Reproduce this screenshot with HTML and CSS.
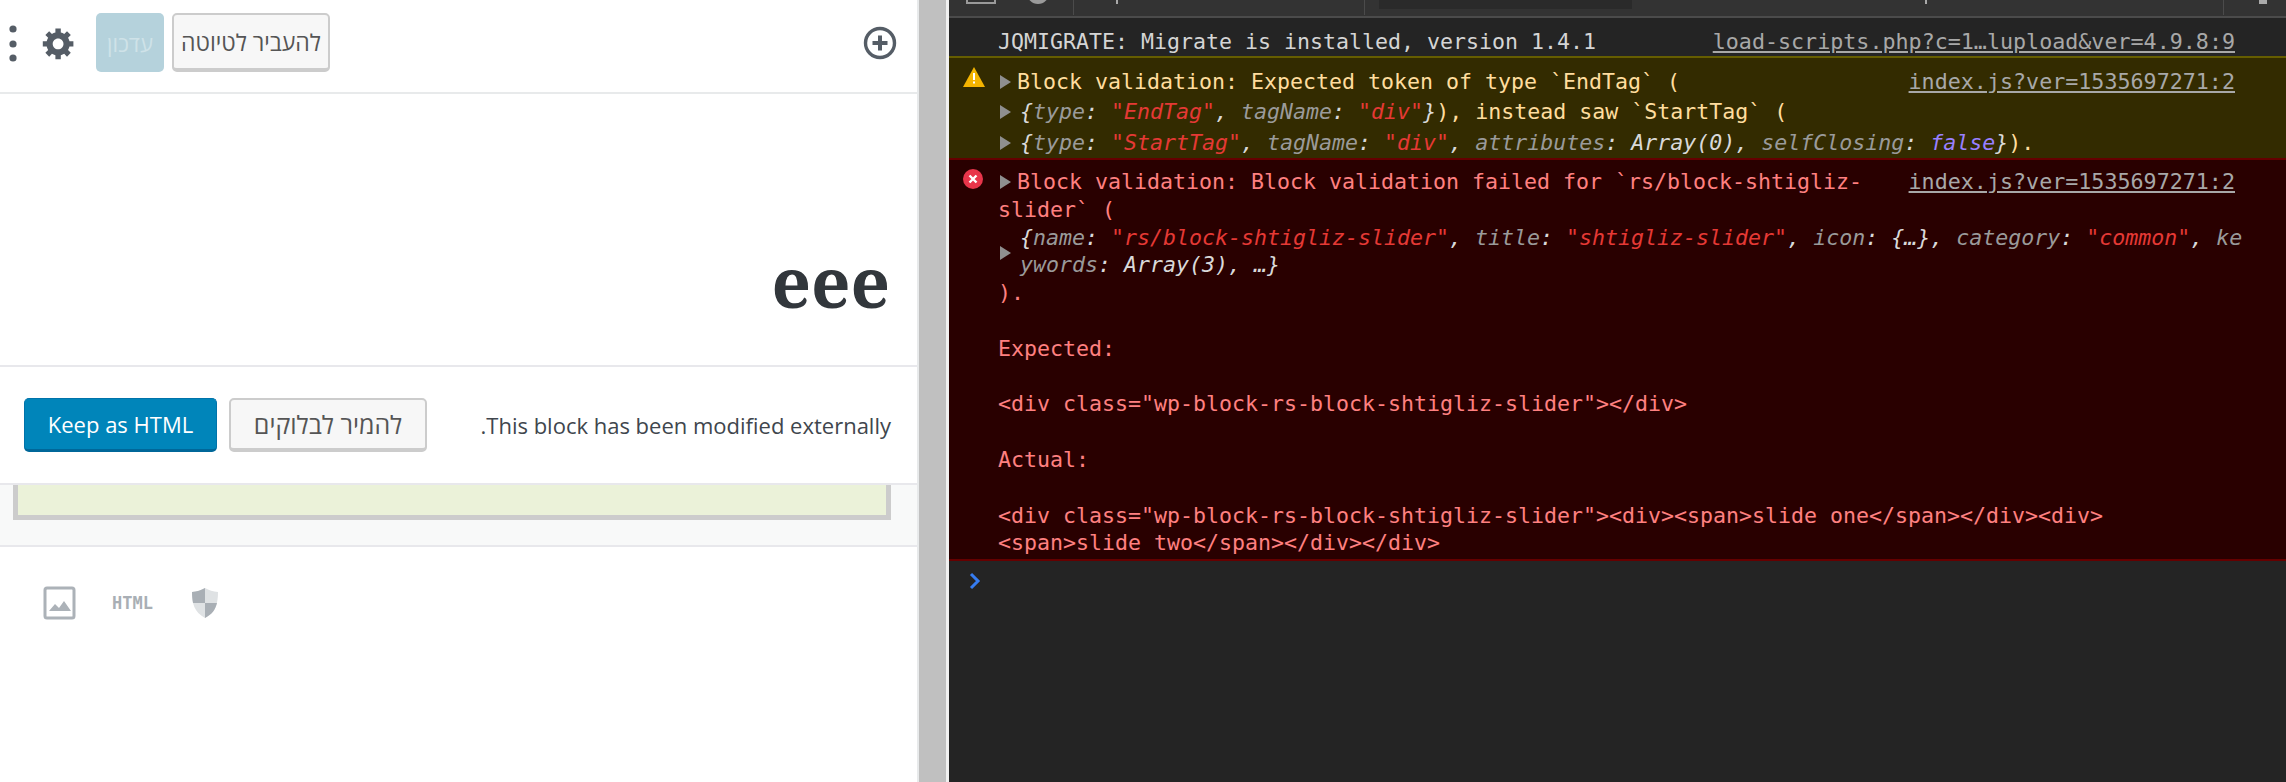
FILE: index.html
```html
<!DOCTYPE html>
<html lang="he">
<head>
    <meta charset="UTF-8">
    <meta name="viewport" content="width=device-width, initial-scale=1.0">
    <title>Block validation</title>
    <link rel="stylesheet" href="styles.css">
</head>
<body>
    <div class="editor">
        <header class="topbar">
            <div class="topbar-left">
                <svg class="dots" width="12" height="44" viewBox="0 0 12 44"><circle cx="6" cy="7" r="3.6"/><circle cx="6" cy="22" r="3.6"/><circle cx="6" cy="36" r="3.6"/></svg>
                <svg class="gear" width="36" height="36" viewBox="0 0 20 20"><path d="M18 12h-2.180c-.17.7-.44 1.350-.81 1.930l1.540 1.540-2.100 2.100-1.540-1.540c-.58.36-1.230.63-1.910.79V19H8v-2.180c-.68-.16-1.330-.43-1.910-.79l-1.540 1.540-2.120-2.120 1.540-1.540c-.36-.58-.63-1.230-.79-1.910H1V9.030h2.170c.16-.7.44-1.350.8-1.940L2.430 5.550l2.100-2.100 1.540 1.540c.58-.37 1.240-.64 1.930-.81V2h3v2.180c.68.16 1.330.43 1.910.79l1.540-1.540 2.120 2.120-1.540 1.540c.36.59.64 1.240.8 1.940H18V12zm-8.500 1.500c1.660 0 3-1.340 3-3s-1.340-3-3-3-3 1.340-3 3 1.340 3 3 3z"/></svg>
                <button class="btn btn-update">עדכון</button>
                <button class="btn btn-draft">להעביר לטיוטה</button>
            </div>
            <svg class="plus" width="36" height="36" viewBox="0 0 36 36"><circle cx="18" cy="18" r="14.500"/><path d="M18 10.500v15M10.500 18h15"/></svg>
        </header>

        <div class="title-area">
            <h1>eee</h1>
        </div>

        <div class="warning-bar" dir="rtl">
            <p>This block has been modified externally.</p>
            <div class="warning-actions">
                <button class="btn btn-convert">להמיר לבלוקים</button>
                <button class="btn btn-primary">Keep as HTML</button>
            </div>
        </div>

        <div class="block-preview">
            <div class="green-box"></div>
        </div>

        <div class="inserter-icons">
            <svg width="34" height="34" viewBox="0 0 34 34"><rect x="2" y="2" width="29" height="30" rx="2" class="img-frame"/><path d="M6 25l6-7 4 4 5-7 7 10z" class="img-hill"/></svg>
            <span class="html-icon">HTML</span>
            <svg width="28" height="32" viewBox="0 0 28 32"><path d="M14 1c4 2.500 8 3.500 13 4 0 11-2 20-13 26C3 25 1 16 1 5c5-.5 9-1.500 13-4z" class="shield-light"/><path d="M14 1v15H2C1.300 12 1 8 1 5c5-.5 9-1.500 13-4zM14 16h12c-1.500 6.500-5 11.500-12 15z" class="shield-dark"/></svg>
        </div>
    </div>

    <div class="scrollbar"></div>

    <div class="console">
        <div class="console-toolbar">
            <span class="tb-panel"></span>
            <span class="tb-stop"></span>
            <span class="tb-sep tb-sep-a"></span>
            <span class="tb-tick tb-tick-a"></span>
            <span class="tb-sep tb-sep-b"></span>
            <span class="tb-filter"></span>
            <span class="tb-tick tb-tick-b"></span>
            <span class="tb-sep tb-sep-c"></span>
            <span class="tb-square"></span>
        </div>

        <div class="msg msg-log">
            <div class="line"><a class="src">load-scripts.php?c=1…lupload&amp;ver=4.9.8:9</a>JQMIGRATE: Migrate is installed, version 1.4.1</div>
        </div>

        <div class="msg msg-warn">
            <svg class="msg-icon" width="22" height="20" viewBox="0 0 22 20"><path d="M11 0l11 20H0z" class="warn-tri"/><path d="M10 6h2v7h-2zM10 14.500h2v2h-2z" class="warn-mark"/></svg>
            <div class="line line-lead"><a class="src">index.js?ver=1535697271:2</a><i class="arrow"></i>Block validation: Expected token of type `EndTag` (</div>
            <div class="line line-obj"><i class="arrow"></i><em class="val">{<span class="key">type</span>: <span class="str">"EndTag"</span>, <span class="key">tagName</span>: <span class="str">"div"</span>}</em>), instead saw `StartTag` (</div>
            <div class="line line-obj"><i class="arrow"></i><em class="val">{<span class="key">type</span>: <span class="str">"StartTag"</span>, <span class="key">tagName</span>: <span class="str">"div"</span>, <span class="key">attributes</span>: Array(0), <span class="key">selfClosing</span>: <span class="bool">false</span>}</em>).</div>
        </div>

        <div class="msg msg-error">
            <svg class="msg-icon" width="20" height="20" viewBox="0 0 20 20"><circle cx="10" cy="10" r="10" class="err-dot"/><path d="M6.500 6.500l7 7M13.500 6.500l-7 7" class="err-x"/></svg>
            <div class="line line-lead"><a class="src">index.js?ver=1535697271:2</a><i class="arrow"></i>Block validation: Block validation failed for `rs/block-shtigliz-</div>
            <div class="line">slider` (</div>
            <div class="obj-wrap">
                <i class="arrow"></i>
                <div class="line val">{<span class="key">name</span>: <span class="str">"rs/block-shtigliz-slider"</span>, <span class="key">title</span>: <span class="str">"shtigliz-slider"</span>, <span class="key">icon</span>: {…}, <span class="key">category</span>: <span class="str">"common"</span>, <span class="key">ke</span></div>
                <div class="line val"><span class="key">ywords</span>: Array(3), …}</div>
            </div>
            <div class="line">).</div>
            <div class="line">&nbsp;</div>
            <div class="line">Expected:</div>
            <div class="line">&nbsp;</div>
            <div class="line">&lt;div class="wp-block-rs-block-shtigliz-slider"&gt;&lt;/div&gt;</div>
            <div class="line">&nbsp;</div>
            <div class="line">Actual:</div>
            <div class="line">&nbsp;</div>
            <div class="line">&lt;div class="wp-block-rs-block-shtigliz-slider"&gt;&lt;div&gt;&lt;span&gt;slide one&lt;/span&gt;&lt;/div&gt;&lt;div&gt;</div>
            <div class="line">&lt;span&gt;slide two&lt;/span&gt;&lt;/div&gt;&lt;/div&gt;</div>
        </div>

        <div class="prompt">
            <svg width="14" height="18" viewBox="0 0 14 18"><path d="M3 2l7 7-7 7"/></svg>
        </div>
    </div>
</body>
</html>
```

FILE: styles.css
```css
* {
    box-sizing: border-box;
}
body {
    margin: 0;
    height: 782px;
    overflow: hidden;
    display: flex;
    background: #fff;
    font-family: "Open Sans", "DejaVu Sans", sans-serif;
    color: #555d66;
}

/* left pane, the editor */
.editor {
    width: 919px;
    height: 782px;
    flex: none;
    background: #fff;
    border-right: 2px solid #e8eaeb;
}
.topbar {
    height: 94px;
    border-bottom: 2px solid #e8eaeb;
    display: flex;
    justify-content: space-between;
    align-items: flex-start;
    padding: 13px 19px 0 7px;
}
.topbar-left {
    display: flex;
    align-items: flex-start;
}
.dots {
    fill: #555d66;
    margin-top: 9px;
}
.gear {
    fill: #555d66;
    margin: 12px 19px 0 22px;
}
.plus {
    margin-top: 12px;
    fill: none;
    stroke: #555d66;
}
.plus circle {
    stroke-width: 3.4;
}
.plus path {
    stroke-width: 4;
}
.btn {
    font-family: "Open Sans", "DejaVu Sans", sans-serif;
    font-size: 22px;
    border-radius: 5px;
    padding: 0;
    height: 59px;
    border: 2px solid #ccc;
    border-bottom-width: 4px;
    background: #f7f7f7;
    color: #555;
}
.btn-update {
    width: 68px;
    margin-right: 8px;
    background: #b5d2dc;
    border: 0;
    color: #cfe2e8;
}
.btn-draft {
    width: 158px;
    font-size: 23px;
}
.title-area {
    height: 273px;
    padding: 142px 27px 0 0;
    border-bottom: 2px solid #e8e8ec;
    text-align: right;
}
h1 {
    margin: 0;
    font-family: "Noto Serif", "Liberation Serif", serif;
    font-size: 69px;
    line-height: 90px;
    font-weight: 700;
    color: #32373c;
}
.warning-bar {
    height: 118px;
    border-bottom: 2px solid #e8e8ec;
    display: flex;
    justify-content: space-between;
    align-items: center;
    padding: 0 26px 0 24px;
    font-size: 22px;
}
.warning-bar p {
    margin: 0;
    color: #40464d;
}
.warning-actions {
    display: flex;
    gap: 12px;
}
.btn-convert {
    width: 198px;
    height: 54px;
    font-size: 25px;
}
.btn-primary {
    width: 193px;
    height: 54px;
    background: #0085ba;
    border: 1px solid #0073aa;
    border-bottom: 3px solid #006799;
    color: #fff;
}
.block-preview {
    height: 62px;
    background: #f8f9f9;
    border-bottom: 2px solid #e8e8ec;
    padding: 0 26px 0 13px;
}
.green-box {
    height: 35px;
    background: #ebf2d9;
    border: 5px solid #ccc;
    border-top: 0;
}
.inserter-icons {
    display: flex;
    align-items: center;
    padding: 39px 0 0 43px;
    gap: 36px;
}
.img-frame {
    fill: none;
    stroke: #acb2b8;
    stroke-width: 3;
}
.img-hill {
    fill: #acb2b8;
}
.html-icon {
    font-family: "DejaVu Sans Mono", monospace;
    font-size: 17px;
    font-weight: 700;
    color: #a9afb5;
    width: 43px;
    margin-left: -1px;
}
.shield-light {
    fill: #dfe2e4;
}
.shield-dark {
    fill: #a9afb5;
}

.scrollbar {
    width: 30px;
    flex: none;
    background: #c0c0c0;
    border-right: 3px solid #f0f0f0;
}

/* right pane, the devtools console */
.console {
    flex: 1;
    height: 782px;
    background: #242424;
    font-family: "DejaVu Sans Mono", monospace;
    font-size: 21.6px;
    line-height: 27.8px;
    overflow: hidden;
}
.line {
    white-space: pre;
}
.console-toolbar {
    position: relative;
    height: 18px;
    background: #333;
    border-bottom: 2px solid #4b4b4b;
}
.tb-panel {
    position: absolute;
    left: 17px;
    top: -8px;
    width: 30px;
    height: 12px;
    border: 2px solid #9a9a9a;
}
.tb-stop {
    position: absolute;
    left: 78px;
    top: -12px;
    width: 22px;
    height: 16px;
    border-radius: 0 0 11px 11px;
    background: #9a9a9a;
}
.tb-sep {
    position: absolute;
    top: 0;
    width: 1px;
    height: 15px;
    background: #4b4b4b;
}
.tb-sep-a { left: 124px; }
.tb-sep-b { left: 415px; }
.tb-sep-c { left: 1274px; }
.tb-tick {
    position: absolute;
    top: 0;
    width: 2px;
    height: 4px;
    background: #aaa;
}
.tb-tick-a { left: 167px; }
.tb-tick-b { left: 976px; }
.tb-filter {
    position: absolute;
    left: 430px;
    top: 0;
    width: 253px;
    height: 9px;
    background: #2a2a2a;
}
.tb-square {
    position: absolute;
    left: 1310px;
    top: 0;
    width: 8px;
    height: 4px;
    background: #aaa;
}
.msg {
    position: relative;
    padding-left: 49px;
    padding-right: 51px;
    border-bottom: 2px solid transparent;
}
.msg-log {
    height: 40px;
    padding-top: 10px;
    color: #d5d5d5;
    border-bottom-color: #655d00;
}
.msg-warn {
    height: 102px;
    padding-top: 10px;
    background: #332b00;
    color: #ffdd9e;
    border-bottom-color: #650000;
}
.msg-error {
    height: 401px;
    padding-top: 8px;
    background: #290000;
    color: #ff8080;
    border-bottom-color: #650000;
}
.msg-warn .line-obj {
    height: 31px;
    line-height: 31px;
}
.msg-icon {
    position: absolute;
    left: 14px;
    top: 9px;
}
.warn-tri {
    fill: #f4b400;
}
.warn-mark {
    fill: #fff;
}
.err-dot {
    fill: #e8354a;
}
.err-x {
    stroke: #fff;
    stroke-width: 2.4;
}
.src {
    float: right;
    font-size: 21.7px;
    color: #a8a8a8;
    text-decoration: underline;
}
.arrow {
    display: inline-block;
    width: 0;
    height: 0;
    margin: 0 6px 0 2px;
    border-style: solid;
    border-width: 7px 0 7px 11px;
    border-color: transparent transparent transparent #8f8f8f;
}
.line-obj .arrow {
    margin-right: 9px;
}
.val {
    color: #d9d9d9;
    font-style: italic;
}
.key {
    color: #9a9a9a;
}
.str {
    color: #e53935;
}
.bool {
    color: #9980ff;
}
.obj-wrap {
    position: relative;
    padding-left: 22px;
}
.obj-wrap .arrow {
    position: absolute;
    left: 0;
    top: 22px;
}
.prompt {
    padding: 8px 0 0 19px;
}
.prompt svg {
    fill: none;
    stroke: #367cf1;
    stroke-width: 3;
}
```
